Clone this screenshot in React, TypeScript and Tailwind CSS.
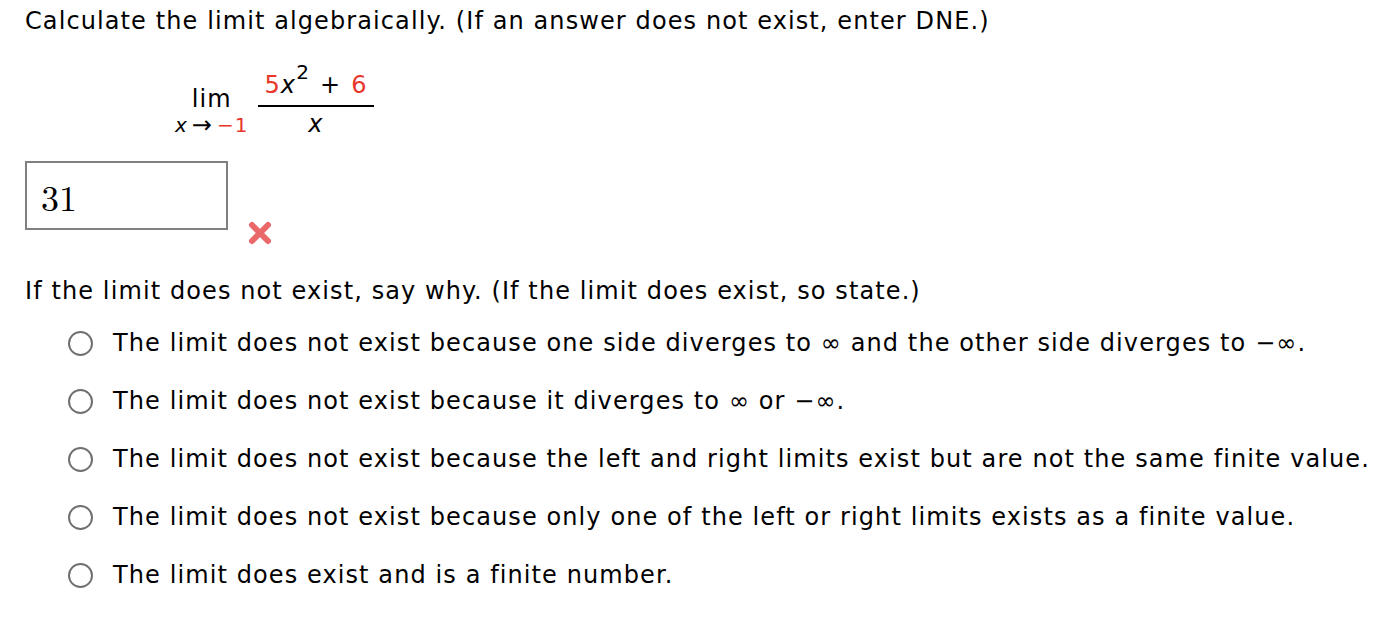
import React from "react";

const options = [
  "The limit does not exist because one side diverges to ∞ and the other side diverges to −∞.",
  "The limit does not exist because it diverges to ∞ or −∞.",
  "The limit does not exist because the left and right limits exist but are not the same finite value.",
  "The limit does not exist because only one of the left or right limits exists as a finite value.",
  "The limit does exist and is a finite number.",
];

function RedX() {
  return (
    <svg width="26" height="26" viewBox="0 0 26 26">
      <path d="M5 5 L21 21 M21 5 L5 21" stroke="#e8575a" strokeWidth="6" strokeLinecap="round" opacity="0.9" />
    </svg>
  );
}

export default function App() {
  return (
    <div className="w-[1394px] h-[638px] bg-white text-black font-['DejaVu_Sans',Verdana,sans-serif] text-[24px] tracking-[1.1px] pl-[25px] pt-[5px]">
      <p className="leading-[32px]">Calculate the limit algebraically. (If an answer does not exist, enter DNE.)</p>

      {/* limit expression */}
      <div className="flex items-center ml-[150px] mt-[30px] h-[76px]">
        <div className="flex flex-col items-center mt-[12px]">
          <span className="leading-[28px]">lim</span>
          <span className="text-[20px] leading-[24px] flex items-center tracking-[1px]">
            <i>x</i>
            <span className="mx-[4px] text-[24px]">→</span>
            <span className="text-[#e8362b]">−1</span>
          </span>
        </div>
        <div className="flex flex-col items-center ml-[10px]">
          <span className="leading-[30px] px-[6px] flex items-end">
            <span className="text-[#e8362b]">5</span>
            <i>x</i>
            <span className="text-[20px] leading-[20px] self-start -mt-[8px]">2</span>
            <span className="ml-[10px]">+</span>
            <span className="text-[#e8362b] ml-[10px]">6</span>
          </span>
          <span className="w-full h-[2px] bg-black mt-[5px]" />
          <i className="leading-[34px]">x</i>
        </div>
      </div>

      {/* answer box */}
      <div className="flex items-start mt-[18px]">
        <div className="w-[203px] h-[69px] border-2 border-[#808080] flex items-center pl-[14px] font-['Latin_Modern_Roman','DejaVu_Serif',serif] text-[36px] tracking-normal">
          31
        </div>
        <div className="ml-[19px] mt-[59px]">
          <RedX />
        </div>
      </div>

      <p className="leading-[32px] mt-[29px]">If the limit does not exist, say why. (If the limit does exist, so state.)</p>

      <div className="mt-[20px] flex flex-col gap-[26px] ml-[43px]">
        {options.map((o) => (
          <label key={o} className="flex items-center h-[32px]">
            <span className="w-[25px] h-[25px] rounded-full border-2 border-[#707070] shrink-0" />
            <span className="ml-[20px]">{o}</span>
          </label>
        ))}
      </div>
    </div>
  );
}
